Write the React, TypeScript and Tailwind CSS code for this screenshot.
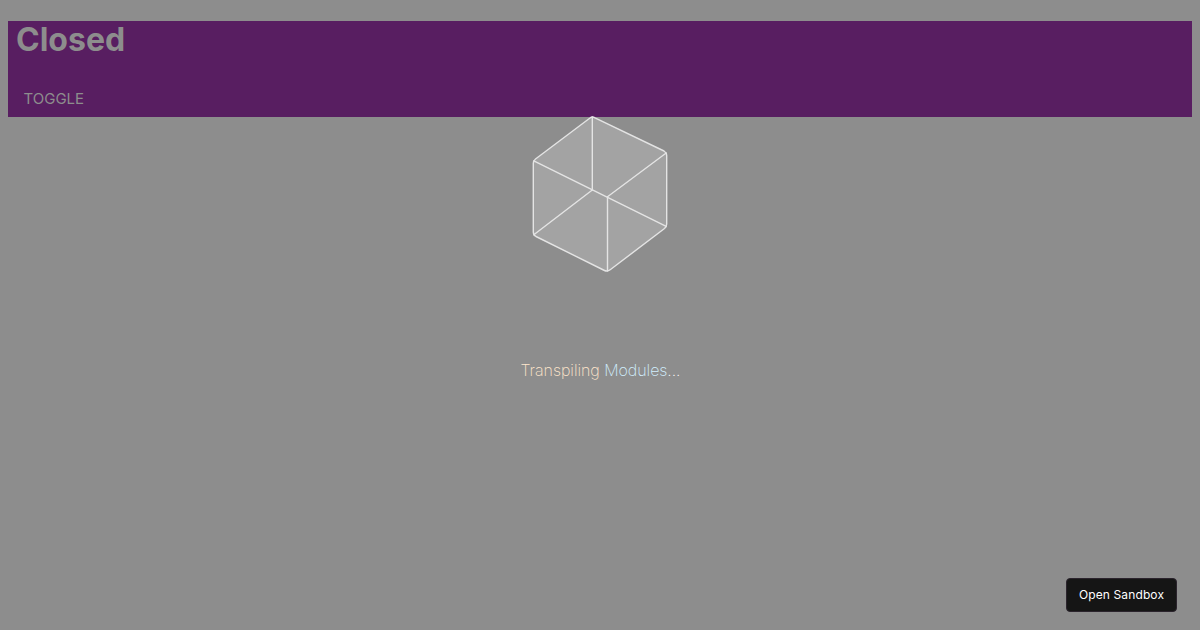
const hexagon =
  "M60 4Q62.3 2 65 3.8L134 37Q136.7 38.7 136.7 41.5V110Q136.7 112.7 134.5 114.5L80.5 155.5Q77.5 158 74.5 156.5L6 122.5Q3.3 121 3.3 118V49.5Q3.3 46.7 5.5 45Z";

export default function App() {
  return (
    <div className="relative h-[630px] w-[1200px] overflow-hidden bg-[#8d8d8d] px-2 pt-[21px] font-['Inter',sans-serif]">
      <div className="h-[96px] bg-[#581e61]">
        <h1 className="pl-2 text-[32px] leading-[38px] font-bold text-[#8d8d8d]">Closed</h1>
        <button className="mt-[24px] py-[6px] pr-4 pl-[15.5px] text-[15px] leading-[20px] text-[#8d8d8d] uppercase">
          Toggle
        </button>
      </div>

      {/* loader overlay */}
      <div className="absolute inset-0 flex flex-col items-center pt-[114px]">
        <svg width="140" height="160" viewBox="0 0 140 160" fill="none">
          <path d={hexagon} fill="#fff" fillOpacity="0.2" />
          <g stroke="#e4e4e4" strokeWidth="1.4" strokeLinejoin="round" strokeLinecap="round">
            <path d={hexagon} />
            <path d="M62.3 3V76" />
            <path d="M3.8 46.9 136.2 112.4" />
            <path d="M136.2 39 77.5 82.7" />
            <path d="M3.8 120.7 62.3 76" />
            <path d="M77.5 82.7V157" />
          </g>
        </svg>
        <p className="mt-[84px] pl-px text-[16px] leading-[24px] tracking-[-0.003em] font-[250] text-[#f8f8f8]">
          <span className="text-[#ffe6cc]">Transpiling </span>
          <span className="text-[#d2efff]">Modules</span>
          <span>...</span>
        </p>
      </div>

      <button className="absolute top-[578px] left-[1066px] h-[34px] w-[111px] rounded-[4px] border border-[#2b242d] bg-[#151515] text-[12px] leading-none tracking-[0.01em] text-white">
        Open Sandbox
      </button>
    </div>
  );
}
